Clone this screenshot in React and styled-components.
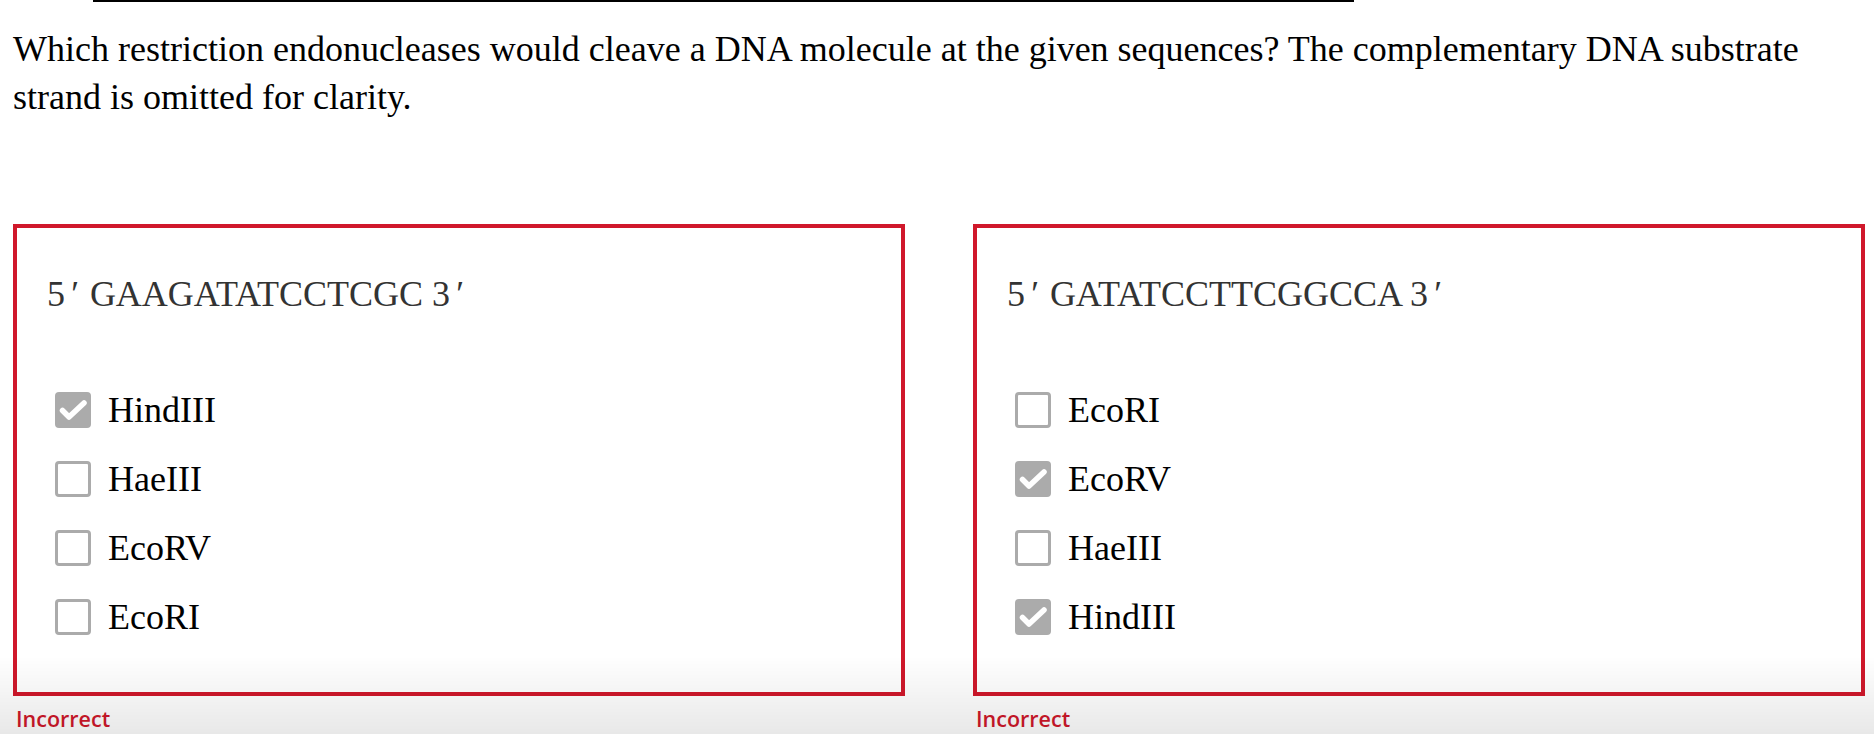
import React from "react";
import styled, { createGlobalStyle } from "styled-components";

const red = "#d0182b";
const boxGrey = "#ababab";

const GlobalStyle = createGlobalStyle`
  html, body {
    margin: 0;
    padding: 0;
    background: #fff;
  }
  body {
    font-family: "Liberation Serif", "Times New Roman", serif;
    color: #000;
  }
`;

const questions = [
  {
    sequence: "GAAGATATCCTCGC",
    options: [
      { name: "HindIII", checked: true },
      { name: "HaeIII", checked: false },
      { name: "EcoRV", checked: false },
      { name: "EcoRI", checked: false },
    ],
  },
  {
    sequence: "GATATCCTTCGGCCA",
    options: [
      { name: "EcoRI", checked: false },
      { name: "EcoRV", checked: true },
      { name: "HaeIII", checked: false },
      { name: "HindIII", checked: true },
    ],
  },
];

export default function App() {
  return (
    <Page>
      <GlobalStyle />
      <Rule />
      <Prompt>
        Which restriction endonucleases would cleave a DNA molecule at the given
        sequences? The complementary DNA substrate strand is omitted for clarity.
      </Prompt>
      <Columns>
        {questions.map((q, i) => (
          <Column key={i}>
            <Card>
              <Sequence>
                5<Prime>′</Prime> {q.sequence} 3<Prime>′</Prime>
              </Sequence>
              <Options>
                {q.options.map((opt) => (
                  <Option key={opt.name}>
                    <Box checked={opt.checked}>
                      {opt.checked && (
                        <svg width="36" height="36" viewBox="0 0 36 36">
                          <path
                            d="M7.5 18.5 L14 25 L29 11"
                            fill="none"
                            stroke="#fff"
                            strokeWidth="5.5"
                            strokeLinecap="round"
                            strokeLinejoin="round"
                          />
                        </svg>
                      )}
                    </Box>
                    <Label>{opt.name}</Label>
                  </Option>
                ))}
              </Options>
            </Card>
            <Feedback>Incorrect</Feedback>
          </Column>
        ))}
      </Columns>
      <Fade />
    </Page>
  );
}

const Page = styled.div`
  position: relative;
  min-height: 734px;
`;

const Rule = styled.div`
  margin-left: 93px;
  width: 1261px;
  height: 2px;
  background: #000;
`;

const Prompt = styled.p`
  margin: 23px 0 0;
  padding: 0 40px 0 13px;
  font-size: 36px;
  line-height: 48px;
`;

const Columns = styled.div`
  display: grid;
  grid-template-columns: 892px 892px;
  column-gap: 68px;
  padding-left: 13px;
  margin-top: 103px;
`;

const Column = styled.div`
  display: flex;
  flex-direction: column;
`;

const Card = styled.div`
  border: 4px solid ${red};
  padding: 42px 35px 41px 30px;
  background: #fff;
`;

const Sequence = styled.div`
  font-size: 36px;
  line-height: 48px;
  color: #333;
  margin-bottom: 57px;
`;

const Prime = styled.span`
  font-style: italic;
  margin: 0 4px;
`;

const Options = styled.div`
  display: flex;
  flex-direction: column;
`;

const Option = styled.label`
  display: flex;
  align-items: center;
  height: 69px;
  padding-left: 8px;
`;

const Box = styled.span`
  box-sizing: border-box;
  width: 36px;
  height: 36px;
  border-radius: 4px;
  border: ${(p) => (p.checked ? "none" : `3px solid ${boxGrey}`)};
  background: ${(p) => (p.checked ? boxGrey : "#fff")};
  display: flex;
  align-items: center;
  justify-content: center;
  flex-shrink: 0;
  margin-right: 17px;
`;

const Label = styled.span`
  font-size: 36px;
  line-height: 48px;
`;

const Feedback = styled.div`
  margin-top: 8px;
  padding-left: 3px;
  font-family: "Open Sans", "Noto Sans", sans-serif;
  font-weight: 600;
  font-size: 21.5px;
  line-height: 30px;
  color: ${red};
`;

const Fade = styled.div`
  position: fixed;
  left: 0;
  right: 0;
  bottom: 0;
  height: 78px;
  pointer-events: none;
  background: linear-gradient(to bottom, rgba(0, 0, 0, 0), rgba(0, 0, 0, 0.09));
`;
